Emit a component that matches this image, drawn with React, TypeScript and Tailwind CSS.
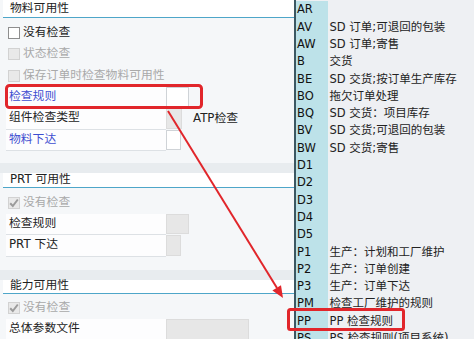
import React from "react";

const latin = "font-['DejaVu_Sans','Noto_Sans_CJK_SC',sans-serif]";

type Row =
  | { kind: "check"; label: string; state: "on" | "off" | "disabled" | "disabledOn" }
  | { kind: "field"; label: string; link?: boolean; box: "white" | "gray"; w: number; after?: string };

const sections: { title: string; head: string; pb: string; rows: Row[] }[] = [
  {
    title: "物料可用性",
    head: "h-[18px]",
    pb: "pb-[12px]",
    rows: [
      { kind: "check", label: "没有检查", state: "off" },
      { kind: "check", label: "状态检查", state: "disabled" },
      { kind: "check", label: "保存订单时检查物料可用性", state: "disabled" },
      { kind: "field", label: "检查规则", link: true, box: "white", w: 23 },
      { kind: "field", label: "组件检查类型", box: "gray", w: 16, after: "ATP检查" },
      { kind: "field", label: "物料下达", link: true, box: "white", w: 15 },
    ],
  },
  {
    title: "PRT 可用性",
    head: "h-[15px]",
    pb: "pb-[13px]",
    rows: [
      { kind: "check", label: "没有检查", state: "disabledOn" },
      { kind: "field", label: "检查规则", box: "gray", w: 23 },
      { kind: "field", label: "PRT 下达", box: "gray", w: 15 },
    ],
  },
  {
    title: "能力可用性",
    head: "h-[14px]",
    pb: "pb-[13px]",
    rows: [
      { kind: "check", label: "没有检查", state: "disabledOn" },
      { kind: "field", label: "总体参数文件", box: "gray", w: 83 },
    ],
  },
];

const codes: [string, string][] = [
  ["AR", ""],
  ["AV", "SD 订单;可退回的包装"],
  ["AW", "SD 订单;寄售"],
  ["B", "交货"],
  ["BE", "SD 交货;按订单生产库存"],
  ["BO", "拖欠订单处理"],
  ["BQ", "SD 交货：项目库存"],
  ["BV", "SD 交货;可退回的包装"],
  ["BW", "SD 交货;寄售"],
  ["D1", ""],
  ["D2", ""],
  ["D3", ""],
  ["D4", ""],
  ["D5", ""],
  ["P1", "生产：计划和工厂维护"],
  ["P2", "生产：订单创建"],
  ["P3", "生产：订单下达"],
  ["PM", "检查工厂维护的规则"],
  ["PP", "PP 检查规则"],
  ["PS", "PS 检查规则(项目系统)"],
];

function Box({ state }: { state: "on" | "off" | "disabled" | "disabledOn" }) {
  if (state === "off")
    return <span className="h-[12px] w-[12px] shrink-0 border border-[#8e8e8e] bg-white" />;
  return (
    <span className="flex h-[12px] w-[12px] shrink-0 items-center justify-center border border-[#d2d2d2] bg-[#e9e9e9]">
      {state === "disabledOn" && (
        <svg width="10" height="10" viewBox="0 0 10 10">
          <path d="M1.2 5.2 L3.8 8 L8.8 1.5" fill="none" stroke="#9b9b9b" strokeWidth="2" />
        </svg>
      )}
    </span>
  );
}

function LeftRow({ row }: { row: Row }) {
  if (row.kind === "check") {
    const muted = row.state !== "off";
    return (
      <div className="flex h-[21.5px] items-center gap-[3px] pl-[8px]">
        <Box state={row.state} />
        <span className={muted ? "text-[#a9a9a9]" : "text-[#222]"}>{row.label}</span>
      </div>
    );
  }
  return (
    <div className="flex h-[21.5px] items-stretch pl-[6px]">
      <div
        className={`flex w-[160px] items-center border-b border-[#dde1e5] bg-[#fdfdfe] pl-[3px] ${
          row.link ? "text-[#3d4dd0]" : "text-[#222]"
        }`}
      >
        {row.label}
      </div>
      <div
        className={`mb-px border ${
          row.box === "white" ? "border-[#cfd3d7] bg-white" : "border-[#dcdcdc] bg-[#e7e7e7]"
        }`}
        style={{ width: row.w }}
      />
      {row.after && <span className="ml-[11px] self-center text-[#222]">{row.after}</span>}
    </div>
  );
}

export default function App() {
  return (
    <div className={`relative flex h-[339px] w-[474px] overflow-hidden text-[11.8px] ${latin}`}>
      <div className="flex w-[294px] shrink-0 flex-col bg-[#f5f7f9]">
        {sections.map((s, i) => (
          <div key={s.title}>
            {i > 0 && <div className="h-[10px] bg-[#e8ecef]" />}
            <div
              className={`ml-[3px] flex ${s.head} items-center border-b border-[#4ea6c9] bg-white pl-[7px] text-[#222]`}
            >
              {s.title}
            </div>
            <div className={`pt-[4px] ${s.pb}`}>
              {s.rows.map((r, j) => (
                <LeftRow key={j} row={r} />
              ))}
            </div>
          </div>
        ))}
      </div>

      <div className="flex-1 border-l-2 border-[#3c5863] bg-[#eef0f3] pt-[1.4px] text-[11.5px] text-[#111]">
        {codes.map(([c, d]) => (
          <div key={c} className="flex h-[17.3px] items-center">
            <div className="flex h-full w-[32px] shrink-0 items-center bg-[#bde2e9] pl-[1px]">{c}</div>
            <div className="pl-[1.5px] text-[#222] whitespace-nowrap">{d}</div>
          </div>
        ))}
      </div>

      <svg className="pointer-events-none absolute inset-0" width="474" height="339">
        <rect x="6.5" y="85.5" width="195" height="22" rx="3" fill="none" stroke="#e1262b" strokeWidth="3" />
        <rect x="288.5" y="309.5" width="115" height="20" rx="2" fill="none" stroke="#e1262b" strokeWidth="3" />
        <line x1="168" y1="111" x2="277" y2="288" stroke="#e1262b" strokeWidth="2" />
        <polygon points="283,298 272.4,290.4 281,285.2" fill="#e1262b" />
      </svg>
    </div>
  );
}
